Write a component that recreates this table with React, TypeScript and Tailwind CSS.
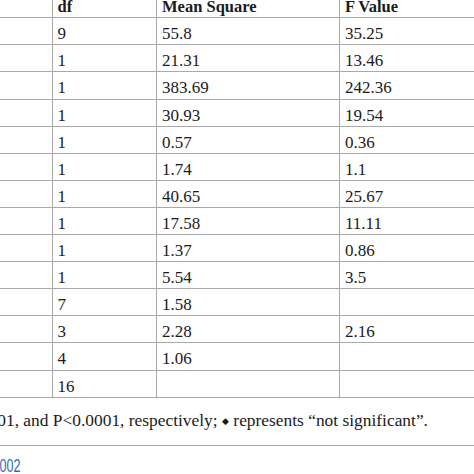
const HEADERS = ["", "df", "Mean Square", "F Value"];

const ROWS: string[][] = [
  ["", "9", "55.8", "35.25"],
  ["", "1", "21.31", "13.46"],
  ["", "1", "383.69", "242.36"],
  ["", "1", "30.93", "19.54"],
  ["", "1", "0.57", "0.36"],
  ["", "1", "1.74", "1.1"],
  ["", "1", "40.65", "25.67"],
  ["", "1", "17.58", "11.11"],
  ["", "1", "1.37", "0.86"],
  ["", "1", "5.54", "3.5"],
  ["", "7", "1.58", ""],
  ["", "3", "2.28", "2.16"],
  ["", "4", "1.06", ""],
  ["", "16", "", ""],
];

const Cell = ({ text, last, bold }: { text: string; last: boolean; bold?: boolean }) => (
  <div
    className={`h-[27.1px] pl-[5px] pt-[6px] leading-[20px] whitespace-nowrap overflow-hidden border-b-[1.5px] border-[#a9a9a9] ${
      last ? "" : "border-r-[1.5px]"
    } ${bold ? "font-bold text-[16.5px]" : "text-[17px]"}`}
  >
    {text}
  </div>
);

export default function App() {
  return (
    <div
      className="w-[474px] h-[474px] overflow-hidden bg-white text-[#1b1b1b]"
      style={{ fontFamily: '"Liberation Serif", "Times New Roman", serif' }}
    >
      {/* Table */}
      <div className="mt-[-8.8px] grid grid-cols-[52.5px_104.5px_183px_1fr]">
        {HEADERS.map((h, i) => (
          <Cell key={`h${i}`} text={h} last={i === 3} bold />
        ))}
        {ROWS.map((row, r) =>
          row.map((c, i) => <Cell key={`${r}-${i}`} text={c} last={i === 3} />)
        )}
      </div>

      {/* Footnote */}
      <div className="pt-[10px] pb-[11px] border-b-[1.5px] border-[#a9a9a9] text-[17.4px] leading-[25px] whitespace-nowrap overflow-hidden">
        <span className="inline-block ml-[-24.5px]">
          0.001, and P&lt;0.0001, respectively;{" "}
          <span className="text-[9px] align-[2px]">◆</span> represents “not significant”.
        </span>
      </div>

      {/* Link */}
      <div className="pt-[9px] whitespace-nowrap overflow-hidden">
        <span
          className="inline-block ml-[-4.5px] origin-left scale-x-[0.72] text-[17.5px] leading-[20px] text-[#2f6cb8]"
          style={{ fontFamily: '"Liberation Sans", Arial, sans-serif' }}
        >
          t002
        </span>
      </div>
    </div>
  );
}
